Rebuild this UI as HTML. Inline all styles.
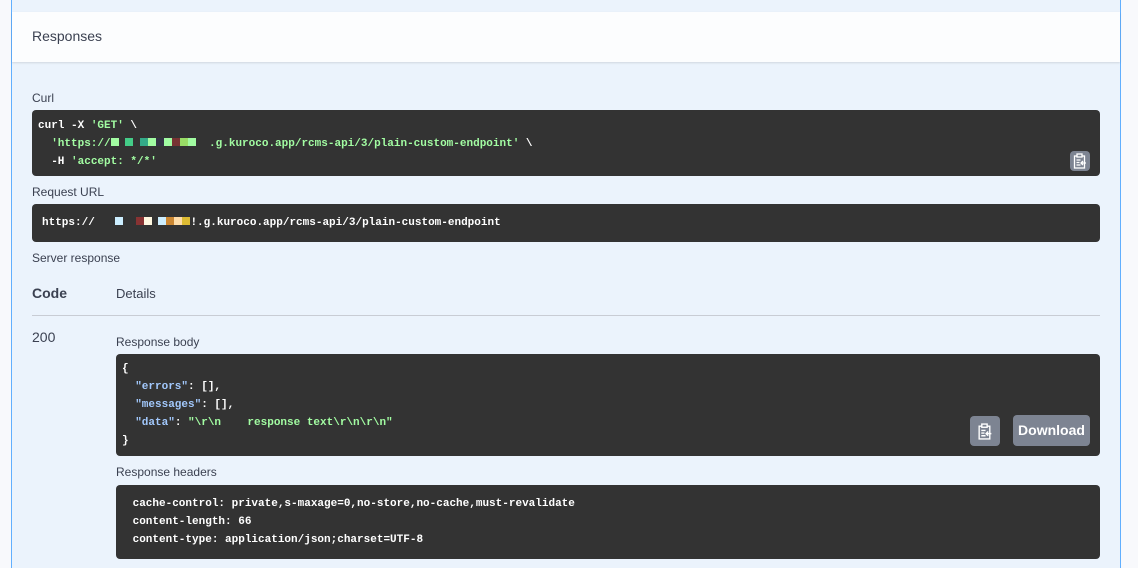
<!DOCTYPE html>
<html><head><style>
*{margin:0;padding:0;box-sizing:border-box}
body{width:1138px;height:568px;background:#f8f9fc;position:relative;overflow:hidden;font-family:"Liberation Sans",sans-serif;color:#3b4151}
.wrap{position:absolute;left:11px;top:0;width:1110px;height:568px;background:#ebf3fc;border-left:1px solid #61affe;border-right:1px solid #61affe}
.hdr{position:absolute;left:12px;top:12px;width:1108px;height:50px;background:#fcfdfe;box-shadow:0 1px 2px rgba(0,0,0,.12)}
.hdr span{position:absolute;left:20px;top:16px;font-size:14px}
.lbl{position:absolute;font-size:12px;color:#3b4151}
.box{position:absolute;background:#333;border-radius:4px;font-family:"Liberation Mono",monospace;font-weight:bold;font-size:11px;color:#fff;white-space:pre;line-height:18px}
.g{color:#a2fca2}.b{color:#a2c8fc}
.sq{display:inline-block;width:8px;height:8px;vertical-align:0}
.btn{position:absolute;background:#7d8492;border-radius:4px}
</style></head><body>
<div class="wrap"></div>
<div class="hdr"><span>Responses</span></div>
<div class="lbl" style="left:32px;top:91px">Curl</div>
<div class="box" style="left:32px;top:110px;width:1068px;height:66px;padding:7px 6px">curl -X <span class="g">'GET'</span> \
  <span class="g">'https://<span class="sq" style="background:#a2fca2"></span> <span class="sq" style="background:#4c8"></span> <span class="sq" style="background:#3a8"></span><span class="sq" style="background:#a2fca2"></span><span class="sq" style="background:#334"></span><span class="sq" style="background:#a2fca2"></span><span class="sq" style="background:#733"></span><span class="sq" style="background:#9d6"></span><span class="sq" style="background:#a2fca2"></span>  .g.kuroco.app/rcms-api/3/plain-custom-endpoint'</span> \
  -H <span class="g">'accept: */*'</span></div>
<div class="btn" style="left:1070px;top:151px;width:20px;height:20px"></div>
<div class="lbl" style="left:32px;top:185px">Request URL</div>
<div class="box" style="left:32px;top:204px;width:1068px;height:38px;padding:10px 10px">https://   <span class="sq" style="background:#cef"></span>  <span class="sq" style="background:#833"></span><span class="sq" style="background:#fff8e0"></span> <span class="sq" style="background:#cef"></span><span class="sq" style="background:#c83"></span><span class="sq" style="background:#fda"></span><span class="sq" style="background:#db3"></span>!.g.kuroco.app/rcms-api/3/plain-custom-endpoint</div>
<div class="lbl" style="left:32px;top:251px">Server response</div>
<div style="position:absolute;left:32px;top:285px;font-size:14px;font-weight:bold">Code</div>
<div class="lbl" style="left:116px;top:286px;font-size:13px">Details</div>
<div style="position:absolute;left:32px;top:315px;width:1068px;height:1px;background:#c8ccd4"></div>
<div style="position:absolute;left:32px;top:329px;font-size:14px">200</div>
<div class="lbl" style="left:116px;top:335px">Response body</div>
<div class="box" style="left:116px;top:354px;width:984px;height:102px;padding:6px 6px">{
  <span class="b">"errors"</span>: [],
  <span class="b">"messages"</span>: [],
  <span class="b">"data"</span>: <span class="g">"\r\n    response text\r\n\r\n"</span>
}</div>
<div class="btn" style="left:970px;top:416px;width:30px;height:30px"></div>
<div class="btn" style="left:1013px;top:415px;width:77px;height:31px;color:#fff;font-weight:bold;font-size:14px;text-align:center;line-height:31px">Download</div>
<div class="lbl" style="left:116px;top:465px">Response headers</div>
<div class="box" style="left:116px;top:485px;width:984px;height:74px;padding:10px 10px"> cache-control: private,s-maxage=0,no-store,no-cache,must-revalidate 
 content-length: 66 
 content-type: application/json;charset=UTF-8 </div>
<svg style="position:absolute;left:1073px;top:153px" width="14" height="16" viewBox="0 0 14 16" fill="none" stroke="#fff" stroke-width="1.3"><rect x="1.5" y="3" width="10" height="12"/><rect x="4" y="1" width="5" height="3" fill="#7d8492"/><path d="M3.5 7h4M3.5 9.5h3M3.5 12h4M13 10H8M10 8l-2 2 2 2"/></svg>
<svg style="position:absolute;left:977px;top:423px" width="16" height="17" viewBox="0 0 14 16" fill="none" stroke="#fff" stroke-width="1.3"><rect x="1.5" y="3" width="10" height="12"/><rect x="4" y="1" width="5" height="3" fill="#7d8492"/><path d="M3.5 7h4M3.5 9.5h3M3.5 12h4M13 10H8M10 8l-2 2 2 2"/></svg>
</body></html>
